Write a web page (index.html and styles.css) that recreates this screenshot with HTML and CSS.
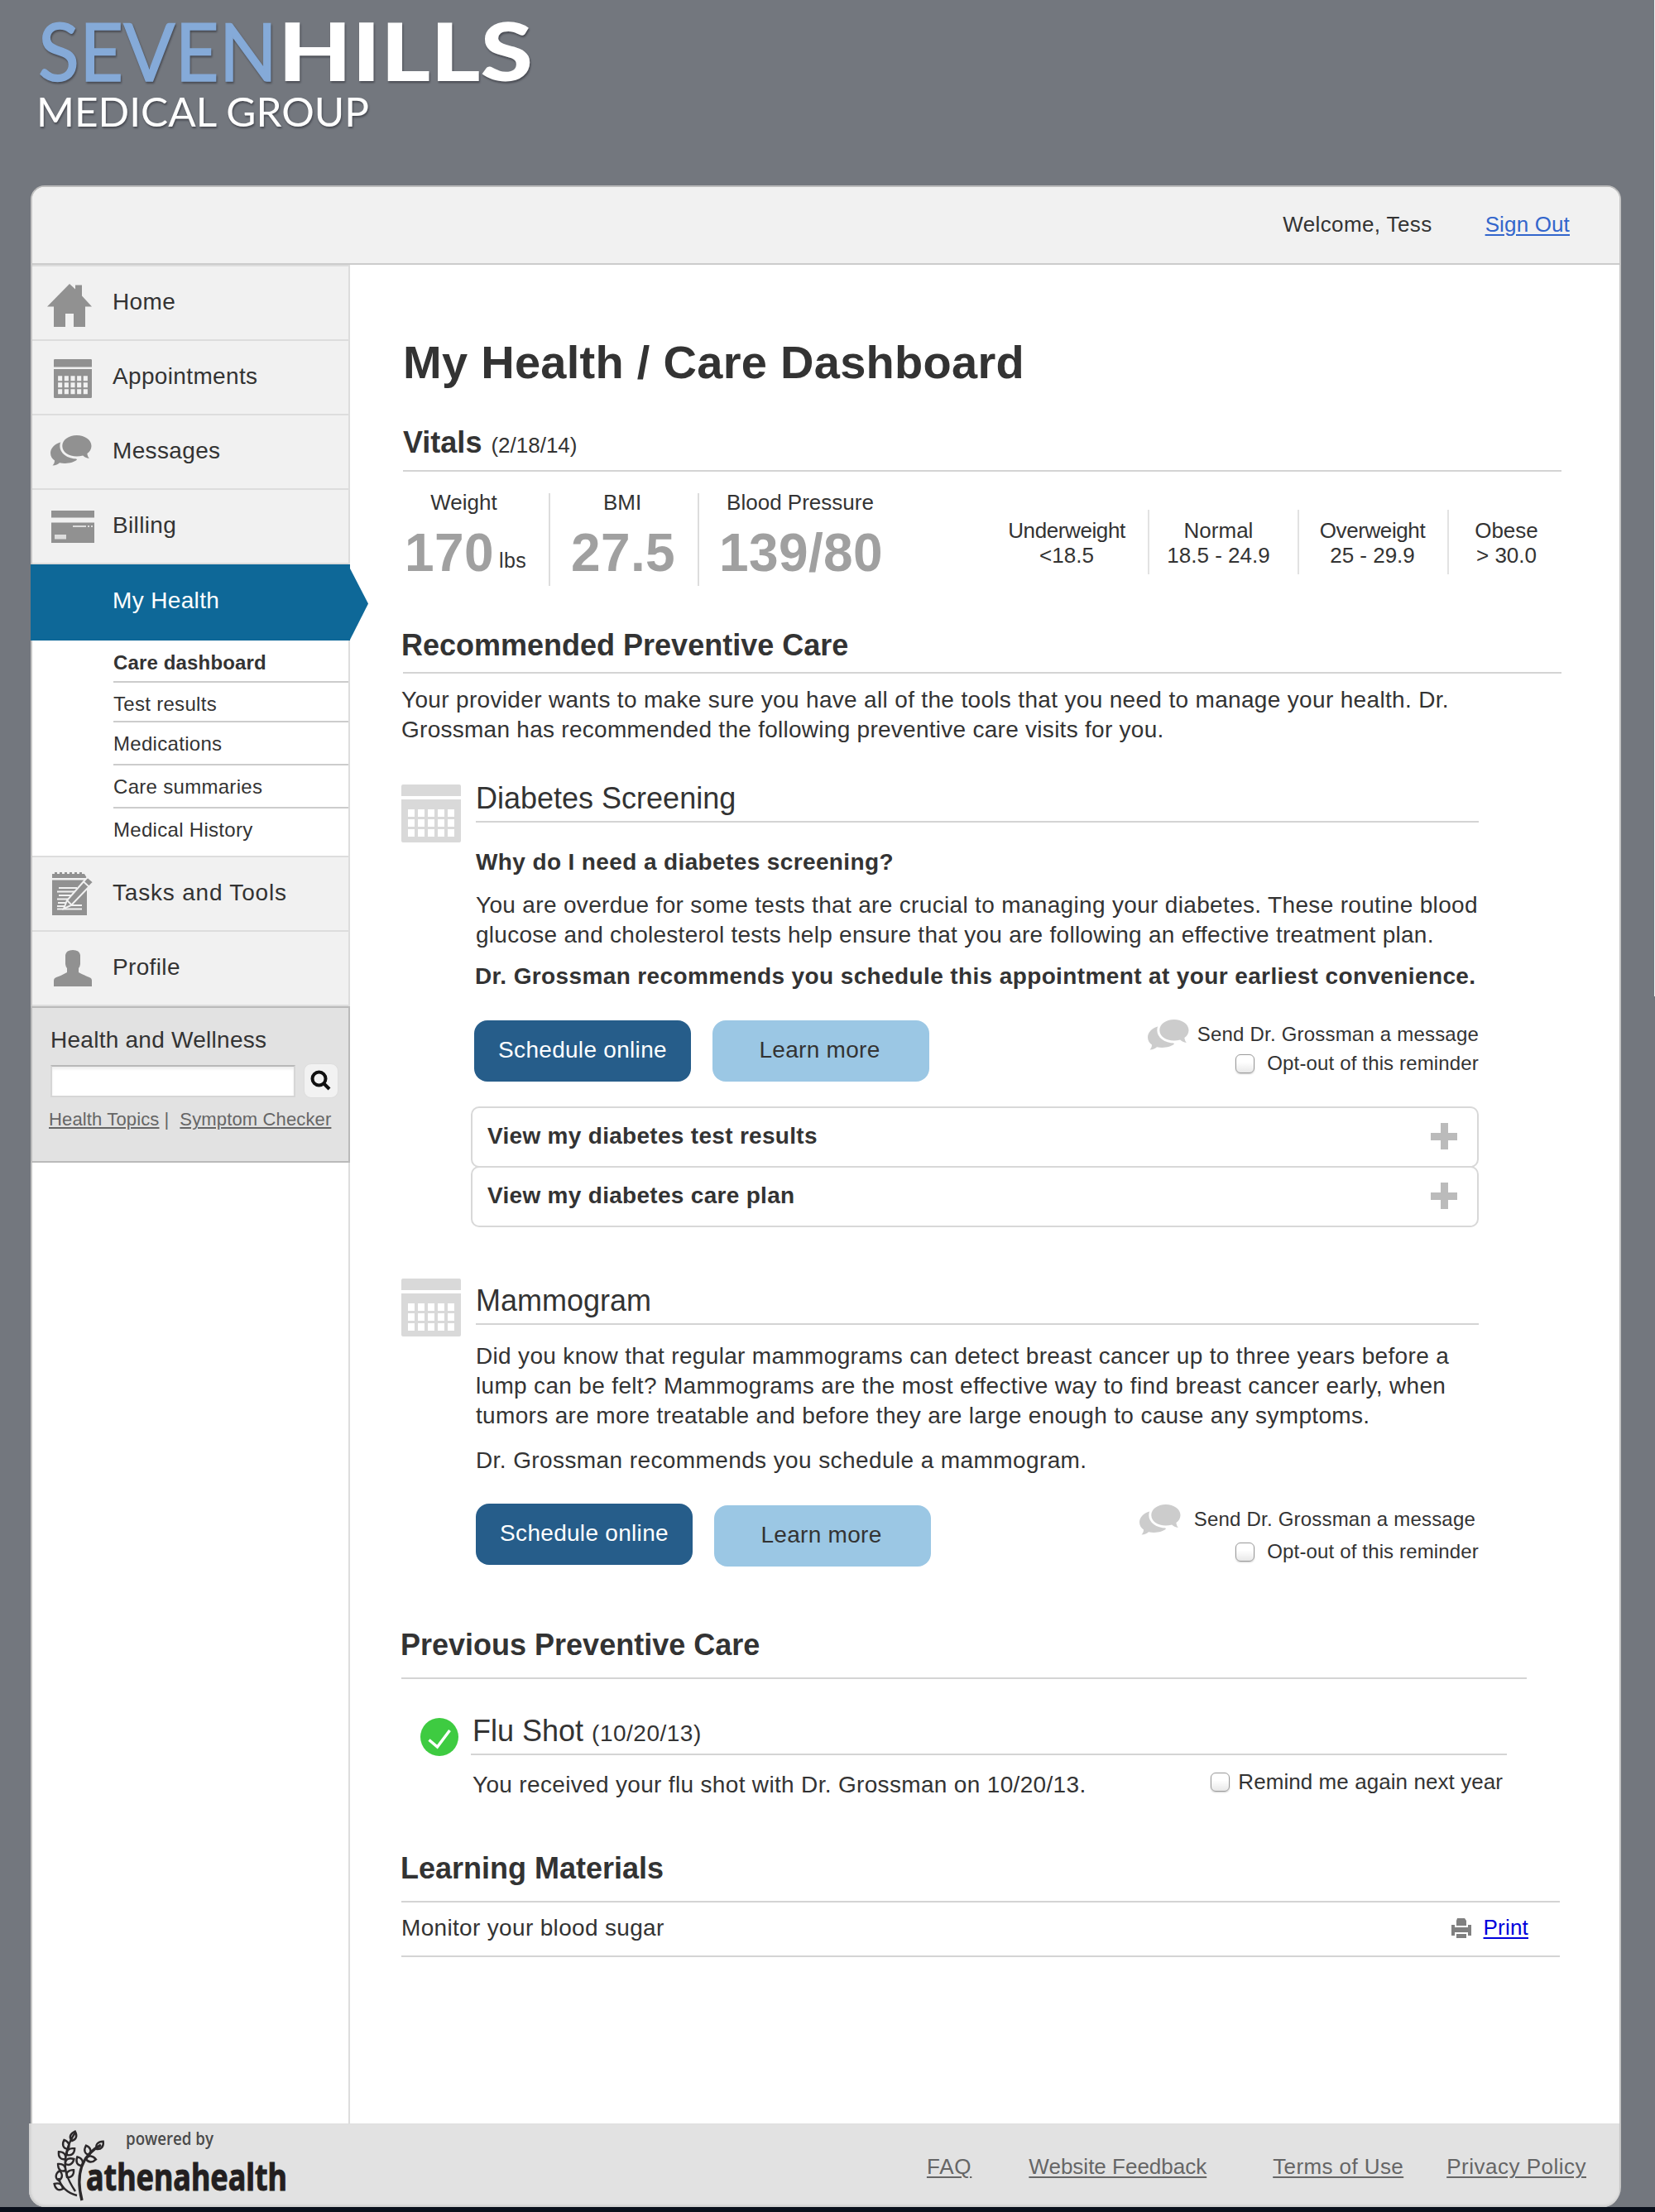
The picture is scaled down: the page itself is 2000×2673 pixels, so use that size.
FILE: index.html
```html
<!DOCTYPE html>
<html lang="en">
<head>
<meta charset="utf-8">
<title>Seven Hills Medical Group - Care Dashboard</title>
<link rel="stylesheet" href="styles.css">
</head>
<body>
<svg class="defs" width="0" height="0" aria-hidden="true">
  <symbol id="calendar" viewBox="0 0 72 70">
    <path fill-rule="evenodd" d="M0 2Q0 0 2 0H70Q72 0 72 2V14H0ZM0 18H72V68Q72 70 70 70H2Q0 70 0 68ZM8 30V39H16V30ZM20 30V39H28V30ZM32 30V39H40V30ZM44 30V39H52V30ZM56 30V39H64V30ZM8 42V51H16V42ZM20 42V51H28V42ZM32 42V51H40V42ZM44 42V51H52V42ZM56 42V51H64V42ZM8 54V63H16V54ZM20 54V63H28V54ZM32 54V63H40V54ZM44 54V63H52V54ZM56 54V63H64V54Z"/>
  </symbol>
  <mask id="bubble-gap" maskUnits="userSpaceOnUse" x="0" y="0" width="50" height="37">
    <rect width="50" height="37" fill="#fff"/>
    <ellipse cx="31.8" cy="13" rx="20.5" ry="15.5" fill="#000"/>
  </mask>
  <symbol id="chat" viewBox="0 0 50 37">
    <path mask="url(#bubble-gap)" d="M12 8.500C4 11 0 16 0 21.500C0 25.500 2 28.500 5 30.500C5 33 4 35 2.500 36.500C6.500 36.500 9 35 11 33.300C20 35 28 33 32 29.500L20 10Z"/>
    <path d="M31.800 0C41.500 0 49.500 5.500 49.500 13C49.500 16.500 47.600 19.800 44.400 22C44.600 24.500 45.600 26.500 46.800 28C43.400 27.700 41 26.600 39.200 24.600C26 28 14.300 22 14.300 13C14.300 5.500 22 0 31.800 0Z"/>
  </symbol>
  <symbol id="leaf" viewBox="-7 -14 14 15" overflow="visible">
    <path d="M0 0C-5.500 -3 -4.500 -8 0 -12C4.500 -8 4.500 -3 0 0Z"/>
  </symbol>
</svg>

<header class="brand">
  <svg class="brand-logo" width="640" height="170" viewBox="0 0 640 170">
    <text class="brand-seven" x="46" y="98" textLength="289" lengthAdjust="spacingAndGlyphs">SEVEN</text>
    <text class="brand-hills" x="336" y="98" textLength="308" lengthAdjust="spacingAndGlyphs">HILLS</text>
    <text class="brand-sub" x="44" y="153" textLength="402" lengthAdjust="spacingAndGlyphs">MEDICAL GROUP</text>
  </svg>
</header>

<div class="panel">
  <div class="topbar">
    <span class="welcome">Welcome, Tess</span>
    <a class="signout" href="#">Sign Out</a>
  </div>

  <div class="columns">
    <nav class="sidebar">
      <ul class="nav">
        <li class="nav-item"><span class="nav-icon nav-icon-home"><svg width="54" height="52" viewBox="0 0 54 52"><path d="M27 0L34 6.500V1.500H42V14.500L54 27.500H46V52H32V36H22V52H8V27.500H0Z"/></svg></span><span class="nav-label">Home</span></li>
        <li class="nav-item"><span class="nav-icon nav-icon-down"><svg width="46" height="47" viewBox="0 0 72 70" preserveAspectRatio="none"><use href="#calendar" width="72" height="70"/></svg></span><span class="nav-label">Appointments</span></li>
        <li class="nav-item"><span class="nav-icon nav-icon-up"><svg width="50" height="37"><use href="#chat"/></svg></span><span class="nav-label">Messages</span></li>
        <li class="nav-item"><span class="nav-icon"><svg width="52" height="39" viewBox="0 0 52 39"><path d="M0 0H52V8.500H0ZM0 14.500H52V39H0Z"/><path class="card-detail" d="M26 18H42V20H26ZM44 18H46V20H44ZM48 18H50V20H48ZM4 29H18V34.500H4Z"/></svg></span><span class="nav-label">Billing</span></li>
      </ul>
      <div class="nav-active"><span>My Health</span><svg class="nav-arrow" width="22" height="86" viewBox="0 0 22 86"><path d="M0 0L22 42.500L0 86Z"/></svg></div>
      <ul class="subnav">
        <li class="subnav-item subnav-current">Care dashboard</li>
        <li class="subnav-item">Test results</li>
        <li class="subnav-item">Medications</li>
        <li class="subnav-item">Care summaries</li>
        <li class="subnav-item">Medical History</li>
      </ul>
      <ul class="nav">
        <li class="nav-item"><span class="nav-icon"><svg width="50" height="52" viewBox="0 0 50 52"><path d="M0 2H3V0H6V2H9V0H12V2H15V0H18V2H21V0H24V2H27V0H30V2H33V0H36V2H39L42 7H0ZM0 9.500H42V52H0Z"/><path class="note-lines" d="M8 19H30M6 23.500H27M8 28H24M6 32.500H21M7 37H17M6 41H15M6 44.500H36M22 40H36"/><path class="pencil" d="M14 44L18 34L40 9L43 6L50 12L46 16L23 40Z"/><path class="note-lines" d="M37.500 11L44.500 17.500M18 34L23.500 39.500"/></svg></span><span class="nav-label nav-label-wide">Tasks and Tools</span></li>
        <li class="nav-item"><span class="nav-icon"><svg width="46" height="44" viewBox="0 0 46 44"><path d="M14 6Q15 0 23 0Q31 0 32 6V17Q31.500 21 30 22V27Q38 31 43 33Q46 34 46 37V44H0V37Q0 34 3 33Q9 31 16 27V22Q14.500 21 14 17Z"/></svg></span><span class="nav-label">Profile</span></li>
      </ul>
      <section class="wellness">
        <h2 class="wellness-title">Health and Wellness</h2>
        <div class="search">
          <input class="search-field" type="text" aria-label="Search">
          <button class="search-button" aria-label="Go"><svg width="26" height="26" viewBox="0 0 26 26"><circle cx="10.500" cy="10.500" r="8"/><path d="M16.500 16.500L23 23"/></svg></button>
        </div>
        <div class="wellness-links"><a href="#">Health Topics</a><span class="bar">|</span><a href="#">Symptom Checker</a></div>
      </section>
    </nav>

    <main class="content">
      <h1 class="page-title">My Health / Care Dashboard</h1>

      <h2 class="section-title vitals-title">Vitals<small>(2/18/14)</small></h2>
      <div class="vitals">
        <div class="metric metric-weight"><div class="metric-label">Weight</div><div class="metric-value">170<span class="unit">lbs</span></div></div>
        <div class="metric metric-bmi"><div class="metric-label">BMI</div><div class="metric-value">27.5</div></div>
        <div class="metric metric-bp"><div class="metric-label">Blood Pressure</div><div class="metric-value">139/80</div></div>
        <div class="ranges">
          <div class="range range-under"><span class="tight">Underweight</span><br>&lt;18.5</div>
          <div class="range range-normal">Normal<br>18.5 - 24.9</div>
          <div class="range range-over"><span class="tight">Overweight</span><br>25 - 29.9</div>
          <div class="range range-obese">Obese<br>&gt; 30.0</div>
        </div>
      </div>

      <h2 class="section-title">Recommended Preventive Care</h2>
      <p class="text intro">Your provider wants to make sure you have all of the tools that you need to manage your health. Dr.<br><span class="snug">Grossman has recommended the following preventive care visits for you.</span></p>

      <article class="care">
        <svg class="care-icon" width="72" height="70"><use href="#calendar"/></svg>
        <div class="care-body">
          <h3 class="care-title">Diabetes Screening</h3>
          <p class="text strong why">Why do I need a diabetes screening?</p>
          <p class="text detail">You are overdue for some tests that are crucial to managing your diabetes. These routine blood<br><span class="snug">glucose and cholesterol tests help ensure that you are following an effective treatment plan.</span></p>
          <p class="text strong advice">Dr. Grossman recommends you schedule this appointment at your earliest convenience.</p>
          <div class="actions">
            <button class="btn btn-primary">Schedule online</button>
            <button class="btn btn-secondary">Learn more</button>
            <div class="aside">
              <div class="aside-message"><svg class="chat-icon" width="50" height="37"><use href="#chat"/></svg><span>Send Dr. Grossman a message</span></div>
              <label class="check-row"><span class="check"></span><span>Opt-out of this reminder</span></label>
            </div>
          </div>
          <div class="accordion">
            <div class="accordion-row"><span>View my diabetes test results</span><i class="plus"></i></div>
            <div class="accordion-row"><span>View my diabetes care plan</span><i class="plus"></i></div>
          </div>
        </div>
      </article>

      <article class="care care-mammogram">
        <svg class="care-icon" width="72" height="70"><use href="#calendar"/></svg>
        <div class="care-body">
          <h3 class="care-title">Mammogram</h3>
          <p class="text facts">Did you know that regular mammograms can detect breast cancer up to three years before a<br>lump can be felt? Mammograms are the most effective way to find breast cancer early, when<br>tumors are more treatable and before they are large enough to cause any symptoms.</p>
          <p class="text advice">Dr. Grossman recommends you schedule a mammogram.</p>
          <div class="actions">
            <button class="btn btn-primary">Schedule online</button>
            <button class="btn btn-secondary">Learn more</button>
            <div class="aside">
              <div class="aside-message"><svg class="chat-icon" width="50" height="37"><use href="#chat"/></svg><span>Send Dr. Grossman a message</span></div>
              <label class="check-row"><span class="check"></span><span>Opt-out of this reminder</span></label>
            </div>
          </div>
        </div>
      </article>

      <h2 class="section-title previous-title">Previous Preventive Care</h2>
      <article class="done">
        <svg class="done-icon" width="46" height="46" viewBox="0 0 46 46"><circle cx="23" cy="23" r="23"/><path d="M10.500 26.500L20.500 35L35.500 15"/></svg>
        <div class="done-body">
          <h3 class="care-title done-title">Flu Shot<small>(10/20/13)</small></h3>
          <div class="done-row">
            <p class="text">You received your flu shot with Dr. Grossman on 10/20/13.</p>
            <label class="remind"><span class="check"></span><span>Remind me again next year</span></label>
          </div>
        </div>
      </article>

      <h2 class="section-title learning-title">Learning Materials</h2>
      <div class="material">
        <span class="text">Monitor your blood sugar</span>
        <svg class="printer" width="24" height="24" viewBox="0 0 24 24"><path d="M7 0H16L18 3V9H6V3ZM0 8H4V11H20V8H24V21H20V17H4V21H0ZM6 19H18V24H6Z"/></svg>
        <a class="print" href="#">Print</a>
      </div>
    </main>
  </div>

  <footer class="footer">
    <svg class="athena" width="320" height="90" viewBox="0 0 320 90">
      <g class="plant">
        <path d="M26 3C17 16 11 34 15 52C18 62 22 68 26 74M6 58C8 68 16 76 28 79" />
        <path class="stem" d="M57 18C40 27 24 46 34 85"/>
        <use href="#leaf" x="-7" y="-14" width="14" height="15" transform="translate(22 13) rotate(18)"/>
        <use href="#leaf" x="-7" y="-14" width="14" height="15" transform="translate(17 23) rotate(-22)"/>
        <use href="#leaf" x="-7" y="-14" width="14" height="15" transform="translate(16 30) rotate(50)"/>
        <use href="#leaf" x="-7" y="-14" width="14" height="15" transform="translate(14 35) rotate(-42)"/>
        <use href="#leaf" x="-7" y="-14" width="14" height="15" transform="translate(14 41) rotate(60)"/>
        <use href="#leaf" x="-7" y="-14" width="14" height="15" transform="translate(14 49) rotate(-48)"/>
        <use href="#leaf" x="-7" y="-14" width="14" height="15" transform="translate(16 57) rotate(42)"/>
        <use href="#leaf" x="-7" y="-14" width="14" height="15" transform="translate(6 61) rotate(5)"/>
        <use href="#leaf" x="-7" y="-14" width="14" height="15" transform="translate(11 71) rotate(-60)"/>
        <use href="#leaf" x="-7" y="-14" width="14" height="15" transform="translate(52 23) rotate(40)"/>
        <use href="#leaf" x="-7" y="-14" width="14" height="15" transform="translate(43 30) rotate(-20)"/>
        <use href="#leaf" x="-7" y="-14" width="14" height="15" transform="translate(39 35) rotate(92)"/>
        <use href="#leaf" x="-7" y="-14" width="14" height="15" transform="translate(34 43) rotate(-28)"/>
      </g>
      <text class="powered" x="87" y="18" textLength="106" lengthAdjust="spacingAndGlyphs">powered by</text>
      <text class="athena-name" x="39" y="73" textLength="243" lengthAdjust="spacingAndGlyphs">athenahealth</text>
    </svg>
    <div class="footer-links">
      <a class="faq" href="#">FAQ</a>
      <a class="feedback" href="#">Website Feedback</a>
      <a class="terms" href="#">Terms of Use</a>
      <a class="privacy" href="#">Privacy Policy</a>
    </div>
  </footer>
</div>
<div class="desk-edge"></div>
</body>
</html>
```
FILE: styles.css
```css
* { box-sizing: border-box; }

body {
  margin: 0;
  width: 2000px;
  height: 2673px;
  overflow: hidden;
  font-family: "Liberation Sans", Arial, sans-serif;
  color: #333;
  background: linear-gradient(#f4f4f4, #f4f4f4) right top / 1px 1204px no-repeat, #73777e;
}

h1, h2, h3, p, ul { margin: 0; padding: 0; }
ul { list-style: none; }
svg { display: block; }
button { font-family: inherit; border: 0; padding: 0; }
.defs { position: absolute; }

/* Logo */
.brand { height: 224px; }
.brand text { font-family: Lato, sans-serif; fill: #fff; }
.brand-logo { filter: drop-shadow(1px 2px 1px rgba(40, 42, 50, .6)); overflow: visible; }
.brand .brand-seven { font-size: 97px; fill: #85aad8; stroke: #85aad8; stroke-width: 1.5px; }
.brand .brand-hills { font-size: 97px; font-weight: 900; }
.brand .brand-sub { font-size: 49px; }

/* Panel */
.panel {
  width: 1922px;
  height: 2443px;
  margin-left: 37px;
  border: 2px solid #c4c4c4;
  border-top-color: #bbb;
  border-bottom: 0;
  border-radius: 17px 17px 24px 24px;
  background: #fff;
}
.topbar {
  height: 94px;
  display: flex;
  justify-content: flex-end;
  padding: 29px 60px 0 0;
  background: #f1f1f1;
  border-bottom: 2px solid #ccc;
  border-radius: 15px 15px 0 0;
  font-size: 26px;
  line-height: 32px;
}
.welcome { letter-spacing: .39px; margin-right: 64px; }
.signout { color: #36c; text-underline-offset: 3px; text-decoration-thickness: 2px; letter-spacing: .15px; }
.columns { display: flex; height: 2246px; }

/* Sidebar */
.sidebar { width: 384px; border-right: 2px solid #ddd; flex: none; }
.nav { border-top: 2px solid #ddd; background: #f1f1f1; }
.nav-item { height: 90px; display: flex; align-items: center; border-bottom: 2px solid #ddd; }
.nav-icon { width: 97px; display: flex; justify-content: center; fill: #919191; }
.nav-icon-home { padding-right: 7px; padding-top: 5px; }
.nav-icon-down { padding-top: 3px; }
.nav-icon-up { padding-bottom: 3px; padding-right: 4px; }
.nav-label { font-size: 28px; line-height: 32px; letter-spacing: .35px; padding-bottom: 3px; }
.nav-label-wide { letter-spacing: .8px; }
.card-detail { fill: #ddd; }
.note-lines { stroke: #f1f1f1; stroke-width: 1.8px; fill: none; }
.pencil { stroke: #f1f1f1; stroke-width: 2px; }
.nav-active {
  position: relative;
  height: 92px;
  margin: 0 -2px;
  padding: 28px 0 0 99px;
  background: #0e6898;
  color: #fff;
  font-size: 28px;
  line-height: 32px;
  letter-spacing: .35px;
}
.nav-arrow { position: absolute; left: 100%; top: 5px; fill: #0e6898; }
.subnav { height: 260px; padding-left: 98px; font-size: 24px; line-height: 28px; letter-spacing: .3px; }
.subnav-item { height: 52px; padding-top: 12px; border-bottom: 2px solid #ccc; }
.subnav-item:nth-child(2) { height: 48px; }
.subnav-item:last-child { border-bottom: 0; }
.subnav-current { height: 51px; padding-top: 13px; font-weight: 700; letter-spacing: .15px; }
.wellness {
  height: 189px;
  margin: 0 -2px;
  padding: 23px 0 0 22px;
  background: #e2e2e2;
  border: 2px solid #bababa;
}
.wellness-title { font-size: 28px; font-weight: 400; line-height: 32px; letter-spacing: .26px; }
.search { display: flex; align-items: center; margin-top: 12px; height: 42px; }
.search-field {
  width: 296px;
  height: 39px;
  border: 2px solid #d6d6d6;
  border-top-color: #b8b8b8;
  background: #fff;
  box-shadow: inset 0 3px 3px #eee;
}
.search-button {
  width: 42px;
  height: 42px;
  margin-left: 10px;
  display: flex;
  align-items: center;
  justify-content: center;
  background: #f2f2f2;
  border: 1px solid #ddd;
  border-radius: 9px;
}
.search-button svg { fill: none; stroke: #111; stroke-width: 4px; }
.wellness-links { display: flex; margin: 13px 0 0 -2px; font-size: 22px; line-height: 26px; letter-spacing: .14px; color: #666; }
.wellness-links a { color: #666; text-decoration-thickness: 2px; text-underline-offset: 2px; }
.bar { margin: 0 13px 0 6px; }

/* Content */
.content { flex: none; width: 1534px; padding: 86px 0 0 62px; }
.text { font-size: 28px; line-height: 36px; letter-spacing: .33px; }
.snug { letter-spacing: .27px; }
.strong { font-weight: 700; letter-spacing: .38px; }
.page-title { font-size: 56px; line-height: 64px; margin-left: 2px; letter-spacing: .28px; }
.section-title {
  width: 1400px;
  margin-left: 2px;
  padding-bottom: 12px;
  border-bottom: 2px solid #d4d4d4;
  font-size: 36px;
  line-height: 40px;
  text-indent: -2px;
}
.section-title small { margin-left: 11px; font-size: 26px; font-weight: 400; line-height: 1; }
.vitals-title { margin-top: 45px; padding-bottom: 13px; text-indent: 0; }
.vitals { display: flex; height: 190px; padding-top: 26px; margin-left: 2px; }
.metric { flex: none; height: 112px; text-align: center; }
.metric + .metric { border-left: 2px solid #ddd; }
.metric-weight { width: 176px; padding-right: 29px; }
.metric-bmi { width: 180px; padding-right: 4px; }
.metric-bp { width: 246px; }
.metric-label { margin-top: -4px; font-size: 26px; line-height: 30px; }
.metric-value { margin-top: 11px; font-size: 64px; font-weight: 700; line-height: 70px; color: #a0a0a0; white-space: nowrap; letter-spacing: .4px; padding-left: 2px; }
.unit { margin-left: 6px; font-size: 25px; font-weight: 400; color: #333; vertical-align: 4px; line-height: 1; }
.ranges { display: flex; flex: none; margin: 20px 0 0 102px; height: 78px; font-size: 26px; line-height: 30px; text-align: center; }
.range { padding-top: 10px; flex: none; }
.range + .range { border-left: 2px solid #e2e2e2; }
.range-under { width: 196px; }
.range-normal { width: 181px; padding-right: 12px; }
.range-over { width: 181px; padding-right: 2px; }
.range-obese { width: 142px; padding-right: 1px; }
.tight { letter-spacing: -.4px; }
.intro { margin-top: 14px; }

.care { display: grid; grid-template-columns: 72px 1212px; column-gap: 18px; margin-top: 45px; }
.care-icon { margin-top: 3px; fill: #d9d9d9; }
.care-title { padding-bottom: 7px; border-bottom: 2px solid #d4d4d4; font-size: 36px; font-weight: 400; line-height: 40px; }
.why { margin-top: 30px; }
.detail { margin-top: 16px; }
.care .advice { margin-top: 14px; margin-left: -1px; }
.actions { display: flex; align-items: flex-start; gap: 26px; margin: 35px 0 0 -2px; }
.btn { width: 262px; height: 74px; border-radius: 16px; font-size: 28px; letter-spacing: .3px; padding-bottom: 2px; }
.btn-primary { background: #265d8a; color: #fff; }
.btn-secondary { background: #9bc7e4; color: #333; padding-right: 3px; }
.aside { margin-left: auto; margin: -1px 0 -10px auto; display: flex; flex-direction: column; align-items: flex-end; font-size: 24px; line-height: 28px; letter-spacing: .15px; }
.aside-message { display: flex; height: 38px; letter-spacing: .2px; }
.aside-message span { padding-top: 4px; }
.chat-icon { margin-right: 10px; fill: #ccc; }
.check-row { display: flex; align-items: center; height: 30px; }
.check {
  width: 23px;
  height: 23px;
  margin-right: 15px;
  border: 1.5px solid #9a9a9a;
  border-radius: 6px;
  background: linear-gradient(#fff 40%, #e8e8e8);
  box-shadow: 0 1px 2px rgba(0, 0, 0, .2);
}
.accordion { margin: 30px 0 0 -6px; }
.accordion-row {
  height: 74px;
  display: flex;
  align-items: center;
  justify-content: space-between;
  padding: 0 24px 2px 18px;
  border: 2px solid #d8d8d8;
  border-radius: 10px;
  font-size: 28px;
  font-weight: 700;
  letter-spacing: .3px;
}
.accordion-row + .accordion-row { margin-top: -2px; }
.plus {
  width: 32px;
  height: 32px;
  background: linear-gradient(#bbb, #bbb) center / 32px 9px no-repeat, linear-gradient(#bbb, #bbb) center / 9px 32px no-repeat;
}

.care-mammogram { margin-top: 62px; }
.care-mammogram .care-icon { margin-top: 0; }
.care-mammogram .care-body { padding-top: 7px; }
.facts { margin-top: 20px; }
.care-mammogram .advice { margin-top: 18px; margin-left: 0; letter-spacing: .4px; }
.care-mammogram .actions { margin: 34px 0 0; }
.care-mammogram .btn-secondary { margin-top: 2px; }
.care-mammogram .aside { margin-top: 1px; }
.care-mammogram .aside-message { margin-right: 4px; }
.care-mammogram .chat-icon { margin-right: 16px; }
.care-mammogram .check-row { height: 38px; }

.previous-title, .learning-title { margin-left: 0; padding-bottom: 19px; text-indent: -1px; }
.previous-title { width: 1360px; margin-top: 75px; }
.done { display: grid; grid-template-columns: 46px 1252px; column-gap: 15px; margin: 43px 0 0 23px; }
.done-icon { margin-top: 4px; fill: #3ecb41; }
.done-icon path { fill: none; stroke: #fff; stroke-width: 3.5px; }
.done-title { padding-left: 2px; }
.done-title small { margin-left: 10px; font-size: 28px; letter-spacing: .5px; line-height: 1; }
.done-row { display: flex; justify-content: space-between; padding: 18px 5px 0 2px; }
.remind { display: flex; align-items: center; height: 28px; font-size: 26px; letter-spacing: .07px; }
.remind .check { margin-right: 10px; }
.learning-title { margin-top: 63px; }
.material { display: flex; align-items: center; width: 1400px; height: 66px; padding: 0 38px 3px 0; border-bottom: 2px solid #d4d4d4; }
.printer { margin-left: auto; fill: #808080; }
.print { margin-left: 15px; font-size: 26px; color: #00d; text-decoration-thickness: 2px; text-underline-offset: 3px; letter-spacing: .2px; }

/* Footer */
.footer {
  display: flex;
  height: 101px;
  width: 1922px;
  margin-left: -4px;
  background: #e2e2e2;
  border-radius: 0 0 20px 20px;
  box-shadow: inset 0 -3px 3px -1px #ccc, inset 3px 0 3px -1px #ccc;
}
.athena { margin: 8px 0 0 30px; overflow: visible; }
.plant { fill: none; stroke: #2b282a; stroke-width: 2.4px; }
.stem { stroke-width: 3.4px; }
.powered { font-family: "Open Sans", sans-serif; font-size: 22px; font-weight: 600; fill: #4a4a4a; }
.athena-name { font-family: "Noto Sans", sans-serif; font-size: 44px; font-weight: 700; fill: #231f20; stroke: #231f20; stroke-width: 1px; }
.footer-links { display: flex; margin-left: auto; padding: 36px 40px 0 0; font-size: 26px; line-height: 32px; }
.footer-links a { color: #666; text-decoration-thickness: 2px; text-underline-offset: 3px; }
.faq { letter-spacing: .8px; margin-right: 69px; }
.feedback { margin-right: 80px; }
.terms { letter-spacing: .4px; margin-right: 52px; }
.privacy { letter-spacing: .5px; }

.desk-edge { height: 6px; background: #0a101c; }
```
